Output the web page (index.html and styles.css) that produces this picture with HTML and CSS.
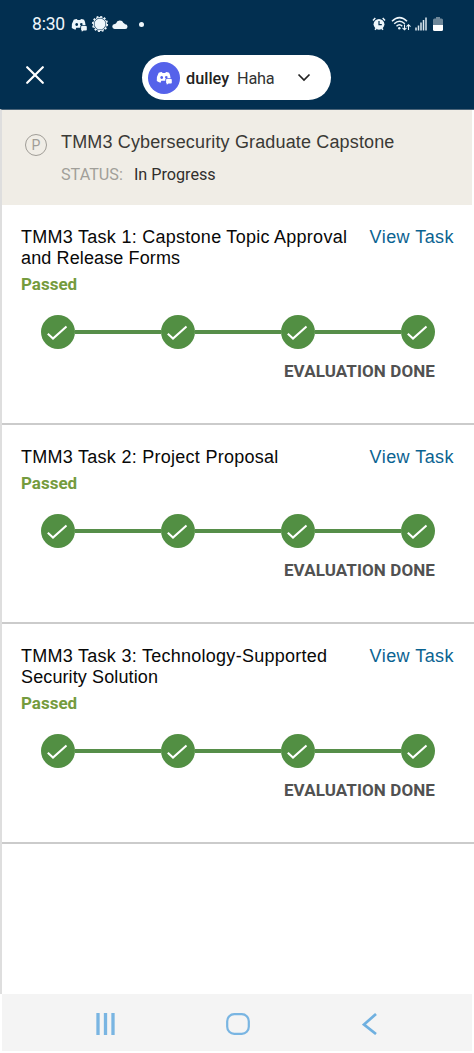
FILE: index.html
```html
<!DOCTYPE html>
<html lang="en">
<head>
<meta charset="utf-8">
<title>Tasks</title>
<link rel="stylesheet" href="styles.css">
</head>
<body>
<svg class="defs" aria-hidden="true">
  <symbol id="robot" viewBox="0 0 16 14">
    <path fill="currentColor" fill-rule="evenodd" d="M2.700 1.800Q4.200 .9 5.800.9L6.600 2H9.200L10 .9q1.600 0 3.100.9 1.400 2.500 1.500 5.400H10.600q-1.300 0-1.300 1.300v1.200H5.300L4.500 11.700Q2.500 11.300.8 10 .4 5.500 2.700 1.800ZM5.700 5a1.400 1.500 0 1 0 .01 0ZM10.300 5a1.300 1.100 0 1 0 .01 0Z"/>
    <path fill="currentColor" d="M10.800 8h4.200q.8 0 .8.800v3q0 .8-.8.800h-2.500L10.800 13.700v-1.200q-.7 0-.7-.7v-3q0-.8.700-.8Z"/>
  </symbol>
  <symbol id="check" viewBox="0 0 34 34">
    <path d="m6.800 18.800 5.200 4.700L25.500 11.500" fill="none" stroke="#fff" stroke-width="2.100"/>
  </symbol>
</svg>
<div class="screen">
  <header class="top">
    <div class="status">
      <span class="clock">8:30</span>
      <svg class="s-robot"><use href="#robot"/></svg>
      <svg class="s-sun" viewBox="0 0 18 18"><circle cx="9" cy="9" r="7.300" fill="none" stroke="#eef6fb" stroke-width="1.600" stroke-dasharray="2 1.820"/><circle cx="9" cy="9" r="6.500" fill="none" stroke="#eef6fb" stroke-width="1"/><circle cx="9" cy="9" r="5.500" fill="#eef6fb"/></svg>
      <svg class="s-cloud" viewBox="0 0 16 9"><path fill="#eef6fb" d="M2.800 9A2.500 2.500 0 0 1 2.700 4 2.400 2.400 0 0 1 4 3.400 4 4 0 0 1 11.500 3 2.500 2.500 0 0 1 13 4.200 2.400 2.400 0 0 1 13.200 9Z"/></svg>
      <span class="dot"></span>
      <span class="spacer"></span>
      <svg class="s-alarm" viewBox="0 0 14 14"><circle cx="7" cy="7.300" r="5.400" fill="#eef6fb"/><path d="M1 3.500 3.300 1M13 3.500 10.700 1M3 12.800l1.300-1.500M11 12.800 9.700 11.300" stroke="#eef6fb" stroke-width="1.500"/><path d="M7 4v3.600h2.800" fill="none" stroke="#04304f" stroke-width="1.200"/></svg>
      <svg class="s-wifi" viewBox="0 0 20 16"><path d="M1 5.300Q8.500-2 16 5.300M3.200 7.800Q8.500 2.700 13.800 7.800M5.500 10.200Q8.500 7.400 11.300 10.200" fill="none" stroke="#eef6fb" stroke-width="1.500"/><circle cx="8.300" cy="12.300" r="1.200" fill="#eef6fb"/><path d="M13.500 8.500v5M11.500 11.800l2 2 2-2M17.500 14V9M15.500 10.700l2-2 2 2" fill="none" stroke="#eef6fb" stroke-width="1.100"/></svg>
      <svg class="s-signal" viewBox="0 0 12 14"><path d="M1 13.500v-3M3.500 13.500V8.500M6 13.500v-8M8.500 13.500V3M11 13.500V.5" stroke="#dce8f0" stroke-width="1.500"/></svg>
      <svg class="s-battery" viewBox="0 0 10 14"><path d="M3 0h4v1.500h1.500Q10 1.500 10 3v5H0V3q0-1.500 1.500-1.500H3Z" fill="#6e8799"/><path d="M0 8h10v4.500q0 1.500-1.500 1.500h-7Q0 14 0 12.500Z" fill="#fff"/></svg>
    </div>
    <div class="bar">
      <svg class="close" viewBox="0 0 18 18"><path d="m1.200 1.200 15.600 15.600m0-15.600L1.200 16.800" stroke="#fff" stroke-width="2.200" stroke-linecap="round"/></svg>
      <div class="pill">
        <span class="avatar"><svg><use href="#robot"/></svg></span>
        <b class="name">dulley</b>
        <span class="last">Haha</span>
        <svg class="chev" viewBox="0 0 14 9"><path d="m1.500 1.500 5.500 5.500 5.500-5.500" fill="none" stroke="#222" stroke-width="1.700"/></svg>
      </div>
    </div>
  </header>
  <main class="main">
    <section class="course">
      <span class="badge">P</span>
      <div>
        <h1 class="course-title">TMM3 Cybersecurity Graduate Capstone</h1>
        <p class="course-status"><span class="label">STATUS:</span><span class="value">In Progress</span></p>
      </div>
    </section>
    <article class="task tall">
      <div class="head"><h2 class="title">TMM3 Task 1: Capstone Topic Approval<br><span class="wrapped">and Release Forms</span></h2><a class="view">View Task</a></div>
      <p class="passed">Passed</p>
      <div class="steps"><svg class="step"><use href="#check"/></svg><i></i><svg class="step"><use href="#check"/></svg><i></i><svg class="step"><use href="#check"/></svg><i></i><svg class="step"><use href="#check"/></svg></div>
      <p class="done">EVALUATION DONE</p>
    </article>
    <article class="task">
      <div class="head"><h2 class="title">TMM3 Task 2: Project Proposal</h2><a class="view">View Task</a></div>
      <p class="passed">Passed</p>
      <div class="steps"><svg class="step"><use href="#check"/></svg><i></i><svg class="step"><use href="#check"/></svg><i></i><svg class="step"><use href="#check"/></svg><i></i><svg class="step"><use href="#check"/></svg></div>
      <p class="done">EVALUATION DONE</p>
    </article>
    <article class="task tall">
      <div class="head"><h2 class="title">TMM3 Task 3: Technology-Supported<br><span class="wrapped">Security Solution</span></h2><a class="view">View Task</a></div>
      <p class="passed">Passed</p>
      <div class="steps"><svg class="step"><use href="#check"/></svg><i></i><svg class="step"><use href="#check"/></svg><i></i><svg class="step"><use href="#check"/></svg><i></i><svg class="step"><use href="#check"/></svg></div>
      <p class="done">EVALUATION DONE</p>
    </article>
  </main>
  <nav class="nav">
    <svg class="recents" viewBox="0 0 20 22"><path d="M2 0v22M9.500 0v22M17 0v22" stroke="#79b5e2" stroke-width="3.300"/></svg>
    <svg class="home" viewBox="0 0 24 22"><rect x="1.200" y="1.200" width="21.600" height="19.600" rx="7" fill="none" stroke="#79b5e2" stroke-width="2.200"/></svg>
    <svg class="back" viewBox="0 0 16 22"><path d="M14 1 2 11.500 14 21" fill="none" stroke="#6fb0e0" stroke-width="2.700"/></svg>
  </nav>
</div>
</body>
</html>
```
FILE: styles.css
```css
* { box-sizing: border-box; }
body { margin: 0; background: #fff; font-family: Roboto, sans-serif; }
h1, h2, p { margin: 0; font-weight: 400; white-space: nowrap; }
svg { display: block; flex: none; }
.defs { width: 0; height: 0; position: absolute; }
.screen { width: 474px; height: 1053px; display: flex; flex-direction: column; overflow: hidden; }
.top { height: 109px; background: #022f50; flex: none; }
.status { display: flex; align-items: center; height: 48px; padding: 0 31px 0 32px; color: #eef6fb; }
.clock { font-size: 17.500px; width: 39px; letter-spacing: -0.200px; white-space: nowrap; }
.s-robot { width: 16px; height: 14px; margin-top: 1px; }
.s-sun { width: 18px; height: 18px; margin-left: 4px; }
.s-cloud { width: 16px; height: 9px; margin-left: 3px; }
.dot { width: 5px; height: 5px; border-radius: 50%; background: #eef6fb; margin-left: 11px; }
.spacer { flex: 1; }
.s-alarm { width: 14px; height: 14px; }
.s-wifi { width: 20px; height: 16px; margin-left: 5px; }
.s-signal { width: 12px; height: 14px; margin-left: 4px; }
.s-battery { width: 10px; height: 14px; margin-left: 6px; }
.bar { display: flex; align-items: center; padding: 7px 0 0 26px; }
.close { width: 18px; height: 18px; margin-top: -5px; }
.pill { display: flex; align-items: center; width: 189px; height: 45px; margin-left: 98px; padding-left: 6px; border-radius: 23px; background: #fff; font-size: 16.300px; color: #222; }
.avatar { width: 32px; height: 32px; border-radius: 50%; background: #5562ea; color: #fff; display: flex; align-items: center; justify-content: center; }
.avatar svg { width: 16px; height: 14px; }
.name { font-weight: 500; margin-left: 6px; width: 51px; padding-top: 2px; }
.last { width: 60px; color: #333; letter-spacing: -0.200px; padding-top: 2px; }
.chev { width: 14px; height: 9px; }
.main { flex: none; height: 885px; border-left: 2px solid #dedede; border-top: 1px solid #4c6579; }
.course { display: flex; height: 95px; margin-right: 2px; background: #f0ede6; padding: 0 0 0 23px; }
.badge { width: 22px; height: 22px; margin: 24px 14px 0 0; border: 1.500px solid #a09d97; border-radius: 50%; color: #a09d97; font-size: 14px; line-height: 20px; text-align: center; }
.course-title { font-family: "Liberation Sans", sans-serif; font-size: 18px; line-height: 24px; margin-top: 20px; color: #3a3935; letter-spacing: 0.150px; }
.course-status { display: flex; gap: 11px; font-size: 16.200px; line-height: 20px; margin-top: 11px; }
.label { color: #a19f99; }
.value { color: #302f2d; }
.task { height: 199px; padding: 22px 20px 0 19px; border-bottom: 2px solid #cbcbcb; }
.task.tall { height: 220px; }
.head { display: flex; justify-content: space-between; }
.title, .view { font-family: "Liberation Sans", sans-serif; font-size: 18px; line-height: 21px; color: #080808; letter-spacing: 0.270px; }
.wrapped { letter-spacing: 0.120px; }
.view { color: #0b6391; white-space: nowrap; letter-spacing: 0.450px; }
.passed { font-size: 17px; font-weight: 700; color: #759b3e; line-height: 20px; margin-top: 5px; }
.steps { display: flex; align-items: center; margin: 21px 0 0 20px; width: 394px; }
.step { width: 34px; height: 34px; border-radius: 50%; background: #528f43; }
.steps i { flex: 1; height: 4px; background: #568e49; }
.done { font-size: 17px; font-weight: 700; color: #515151; line-height: 20px; margin: 12px 19px 0 0; text-align: right; letter-spacing: 0.100px; }
.nav { height: 57px; margin: 0 2px; background: #f4f4f4; display: flex; align-items: center; padding: 3px 94px 0 94px; justify-content: space-between; }
.recents { width: 20px; height: 22px; }
.home { width: 24px; height: 22px; margin-left: -2px; }
.back { width: 16px; height: 22px; }
```
